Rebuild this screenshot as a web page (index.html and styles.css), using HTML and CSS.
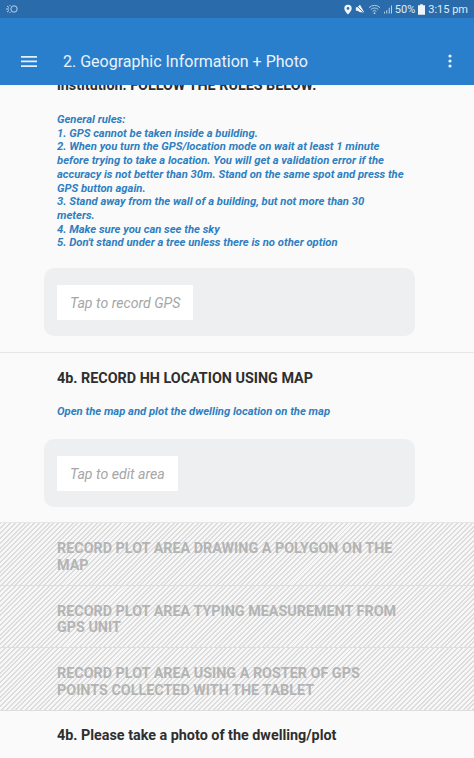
FILE: index.html
```html
<!DOCTYPE html>
<html lang="en">
<head>
<meta charset="utf-8">
<title>Geographic Information + Photo</title>
<link rel="stylesheet" href="styles.css">
</head>
<body>
<div class="screen">
  <header class="header">
    <div class="status">
      <svg class="weather" viewBox="0 0 14 10" width="14" height="10"><g fill="none" stroke="#b9d4ee" stroke-width="1"><circle cx="9" cy="5" r="3.2"/><path d="M1 5h3M2 2l2 1.5M2 8l2-1.5M5 1v1M5 9V8"/></g></svg>
      <div class="status-right">
        <svg viewBox="0 0 10 12" width="8" height="11"><path fill-rule="evenodd" fill="#eef5fc" d="M5 0a4.6 4.6 0 0 1 4.6 4.6C9.600 8 5 12 5 12S.4 8 .4 4.600A4.600 4.600 0 0 1 5 0zm0 3a1.700 1.700 0 1 0 0 3.400A1.700 1.700 0 0 0 5 3z"/></svg>
        <svg viewBox="0 0 12 12" width="10" height="10"><path fill="#eef5fc" d="M1 4h2l3-3 5 9-1 1-1-1H6L3 8H1z"/><path stroke="#2a6eb0" stroke-width="1" d="M1 1l10 10"/></svg>
        <svg viewBox="0 0 14 12" width="13" height="11"><g fill="none" stroke="#b9d4ee" stroke-width="1"><path d="M1 4a8.500 8.500 0 0 1 12 0M3 6a5.700 5.700 0 0 1 8 0M5 8a2.800 2.800 0 0 1 4 0"/></g><circle cx="7" cy="10" r="1" fill="#b9d4ee"/></svg>
        <svg viewBox="0 0 10 11" width="8" height="10"><path fill="#dbe9f7" d="M0 9h1v2H0zM3 7h1v4H3zM6 4h1v7H6zM9 1h1v10H9z"/></svg>
        <span class="status-text">50%</span>
        <svg viewBox="0 0 8 12" width="7" height="11"><path fill="#eef5fc" d="M2.500 0h3v1H8v11H0V1h2.500z"/></svg>
        <span class="status-text">3:15 pm</span>
      </div>
    </div>
    <div class="appbar">
      <svg class="menu" viewBox="0 0 16 11" width="16" height="11"><path fill="#e6f0fa" d="M0 0h16v1.700H0zM0 4.600h16v1.700H0zM0 9.200h16v1.700H0z"/></svg>
      <h1 class="title">2. Geographic Information + Photo</h1>
      <svg class="more" viewBox="0 0 4 14" width="4" height="14"><circle cx="2" cy="2" r="1.600" fill="#e6f0fa"/><circle cx="2" cy="7" r="1.600" fill="#e6f0fa"/><circle cx="2" cy="12" r="1.600" fill="#e6f0fa"/></svg>
    </div>
  </header>
  <main class="content">
    <section class="section first">
      <div class="clipped"><p class="heading clipped-text">institution: FOLLOW THE RULES BELOW.</p></div>
      <p class="hint rules">General rules:<br>1. GPS cannot be taken inside a building.<br>2. When you turn the GPS/location mode on wait at least 1 minute<br>before trying to take a location. You will get a validation error if the<br>accuracy is not better than 30m. Stand on the same spot and press the<br>GPS button again.<br>3. Stand away from the wall of a building, but not more than 30<br>meters.<br>4. Make sure you can see the sky<br>5. Don't stand under a tree unless there is no other option</p>
      <div class="widget"><span class="field">Tap to record GPS</span></div>
    </section>
    <section class="section second">
      <h2 class="heading">4b. RECORD HH LOCATION USING MAP</h2>
      <p class="hint map-hint">Open the map and plot the dwelling location on the map</p>
      <div class="widget"><span class="field">Tap to edit area</span></div>
    </section>
    <section class="disabled">RECORD PLOT AREA DRAWING A POLYGON ON THE MAP</section>
    <section class="disabled">RECORD PLOT AREA TYPING MEASUREMENT FROM GPS UNIT</section>
    <section class="disabled">RECORD PLOT AREA USING A ROSTER OF GPS POINTS COLLECTED WITH THE TABLET</section>
    <section class="section last">
      <h2 class="heading">4b. Please take a photo of the dwelling/plot</h2>
    </section>
  </main>
</div>
</body>
</html>
```
FILE: styles.css
```css
* { box-sizing: border-box; }
html, body { margin: 0; padding: 0; }
body { font-family: Roboto, "Liberation Sans", sans-serif; background: #fafafa; }
.screen { width: 474px; height: 758px; overflow: hidden; display: flex; flex-direction: column; }
.header { flex: none; height: 85px; background: #2a7fcc; color: #eaf3fb; }
.status { height: 18px; padding: 0 6px 0 5px; background: #2a6cab; display: flex; align-items: center; justify-content: space-between; }
.status-right { display: flex; align-items: center; gap: 3px; }
.status-text { font-size: 11px; color: #dfecf8; }
.appbar { height: 67px; padding: 19px 21px 0; display: flex; align-items: center; }
.menu { flex: none; }
.title { flex: 1; margin: 0 0 0 26px; font-size: 16px; font-weight: 400; color: #eaf3fb; }
.more { flex: none; margin-right: 1px; }
.content { flex: 1; overflow: hidden; }
.section { padding: 0 59px 0 57px; border-bottom: 1px solid #e6e6e6; }
.first { height: 268px; }
.clipped { height: 7px; overflow: hidden; }
.heading { margin: 0; font-size: 14.350px; line-height: 17px; font-weight: 700; color: #2e2e2e; }
.clipped-text { margin: -8px 0 0; white-space: nowrap; }
.hint { margin: 0; font-size: 11.250px; line-height: 13.700px; font-weight: 700; font-style: italic; color: #2f7fc1; white-space: nowrap; }
.rules { margin-top: 21px; }
.widget { margin: 18px 0 0 -13px; height: 68px; padding: 17px 13px; border-radius: 10px; background: #eeeff1; }
.field { display: inline-block; height: 35px; line-height: 37px; padding: 0 13px; background: #ffffff; font-size: 14.150px; font-style: italic; color: #a6a6a6; }
.second { height: 170px; padding-top: 17px; }
.map-hint { margin-top: 18px; }
.second .widget { margin-top: 20px; }
.disabled { height: 62.500px; padding: 18px 70px 0 57px; border-bottom: 1px solid #dedede; font-size: 14.350px; line-height: 16.800px; font-weight: 700; color: #b4b4b4; background: repeating-linear-gradient(135deg, #dcdcdc 0, #dcdcdc 1.400px, #f7f7f7 1.400px, #f7f7f7 3.400px); }
.last { padding-top: 16px; border-bottom: none; }
```
